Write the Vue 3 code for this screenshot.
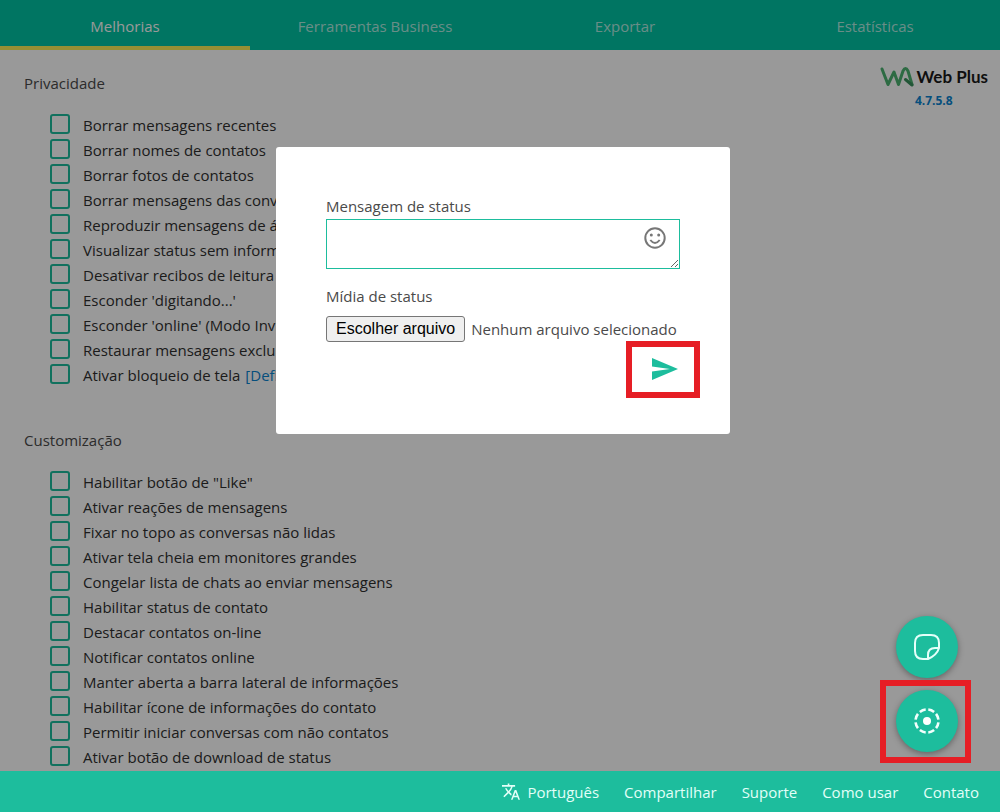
<template>
  <div class="app">
    <nav class="tabs">
      <button
        v-for="tab in tabs"
        :key="tab"
        type="button"
        :class="['tab', { active: tab === activeTab }]"
        @click="activeTab = tab"
      >
        {{ tab }}
      </button>
    </nav>

    <main class="content">
      <div class="sections">
        <section v-for="section in sections" :key="section.title" class="section">
          <h2 class="section-title">{{ section.title }}</h2>
          <ul class="option-list">
            <li v-for="(option, i) in section.options" :key="option" class="option">
              <input :id="section.id + i" type="checkbox" class="check" />
              <label :for="section.id + i">{{ option }}</label>
              <a v-if="option === 'Ativar bloqueio de tela'" href="#" class="link">[Definir senha]</a>
            </li>
          </ul>
        </section>
      </div>

      <div class="brand">
        <div class="brand-name">
          <svg class="brand-logo" width="34" height="20" viewBox="0 0 34 20" fill="none" stroke-linecap="round" stroke-linejoin="round">
            <path d="M2 2 L8 17.5 L14 5 L18.5 17.5 L23 4 Q25.500 -1 28 4 L32 17.500" stroke="#4cb271" stroke-width="3" />
            <path d="M32 18 L25.500 12.500" stroke="#3a8f5c" stroke-width="3" />
          </svg>
          <span>Web Plus</span>
        </div>
        <a href="#" class="version">4.7.5.8</a>
      </div>
    </main>

    <div class="overlay">
      <form class="modal" @submit.prevent>
        <label for="status-text" class="field-label">Mensagem de status</label>
        <div class="text-wrap">
          <textarea id="status-text" v-model="message" class="status-text"></textarea>
          <button type="button" class="emoji" aria-label="Emoji">
            <svg width="24" height="24" viewBox="0 0 24 24" fill="none" stroke="#777" stroke-width="2">
              <circle cx="12" cy="12" r="9.7" />
              <circle cx="8.3" cy="9" r="1.5" fill="#777" stroke="none" />
              <circle cx="15.7" cy="9" r="1.5" fill="#777" stroke="none" />
              <path d="M7.3 14 Q12 20 16.7 14" />
            </svg>
          </button>
        </div>
        <label for="status-media" class="field-label">Mídia de status</label>
        <div class="file-row">
          <input id="status-media" ref="fileInput" type="file" class="file-input" @change="onFile" />
          <button type="button" class="file-button" @click="fileInput.click()">Escolher arquivo</button>
          <span class="file-name">{{ fileName }}</span>
        </div>
        <div class="actions">
          <button type="submit" class="send" aria-label="Enviar">
            <svg width="30" height="30" viewBox="0 0 30 30" fill="#1dbd9d">
              <path d="M2 4 L28 15 L2 26 V17.5 L20 15 L2 12.5 Z" />
            </svg>
          </button>
        </div>
      </form>
    </div>

    <div class="fabs">
      <button type="button" class="fab" aria-label="Figurinhas">
        <svg width="28" height="28" viewBox="0 0 28 28" fill="none" stroke="#e4fff9" stroke-width="2" stroke-linejoin="round">
          <path d="M15 26 H10 Q2 26 2 18 V10 Q2 2 10 2 H18 Q26 2 26 10 V15 Q24 22 15 26 Z" />
          <path d="M15 26 V22 Q15 15 22 15 H26" />
        </svg>
      </button>
      <button type="button" class="fab marked" aria-label="Status">
        <svg width="28" height="28" viewBox="0 0 28 28" fill="none">
          <circle cx="14" cy="14" r="11.5" stroke="#f2fffc" stroke-width="2.6" pathLength="80" stroke-dasharray="7 3" stroke-dashoffset="-1.5" />
          <circle cx="14" cy="14" r="4" fill="#fff" />
        </svg>
      </button>
    </div>

    <footer class="footer">
      <a href="#" class="footer-link">
        <svg width="18" height="18" viewBox="1 2 22 21" fill="#e2fff8">
          <path d="M12.870 15.070l-2.540-2.510.030-.030A17.520 17.520 0 0 0 14.070 6H17V4h-7V2H8v2H1v2h11.170C11.500 7.920 10.440 9.750 9 11.350 8.070 10.320 7.300 9.190 6.690 8h-2c.730 1.630 1.730 3.170 2.980 4.560l-5.090 5.020L4 19l5-5 3.110 3.110.760-2.040zM18.500 10h-2L12 22h2l1.120-3h4.750L21 22h2l-4.500-12zm-2.620 7l1.620-4.330L19.120 17h-3.240z" />
        </svg>
        Português
      </a>
      <a v-for="item in footerLinks" :key="item" href="#" class="footer-link">{{ item }}</a>
    </footer>
  </div>
</template>

<script setup>
import { ref } from 'vue'

const tabs = ['Melhorias', 'Ferramentas Business', 'Exportar', 'Estatísticas']
const activeTab = ref('Melhorias')
const message = ref('')
const fileInput = ref(null)
const fileName = ref('Nenhum arquivo selecionado')

const sections = [
  {
    id: 'privacy',
    title: 'Privacidade',
    options: [
      'Borrar mensagens recentes',
      'Borrar nomes de contatos',
      'Borrar fotos de contatos',
      'Borrar mensagens das conversas',
      'Reproduzir mensagens de áudio',
      'Visualizar status sem informar',
      'Desativar recibos de leitura',
      "Esconder 'digitando...'",
      "Esconder 'online' (Modo Invisível)",
      'Restaurar mensagens excluídas',
      'Ativar bloqueio de tela'
    ]
  },
  {
    id: 'custom',
    title: 'Customização',
    options: [
      'Habilitar botão de "Like"',
      'Ativar reações de mensagens',
      'Fixar no topo as conversas não lidas',
      'Ativar tela cheia em monitores grandes',
      'Congelar lista de chats ao enviar mensagens',
      'Habilitar status de contato',
      'Destacar contatos on-line',
      'Notificar contatos online',
      'Manter aberta a barra lateral de informações',
      'Habilitar ícone de informações do contato',
      'Permitir iniciar conversas com não contatos',
      'Ativar botão de download de status'
    ]
  }
]

const footerLinks = ['Compartilhar', 'Suporte', 'Como usar', 'Contato']

function onFile(e) {
  const file = e.target.files[0]
  fileName.value = file ? file.name : 'Nenhum arquivo selecionado'
}
</script>

<style>
body {
  margin: 0;
}
</style>

<style scoped>
.app {
  position: relative;
  display: flex;
  flex-direction: column;
  height: 100vh;
  overflow: hidden;
  background: #fff;
  color: #4a4a4a;
  font-family: 'Open Sans', 'Noto Sans', sans-serif;
  font-size: 15px;
}
button {
  padding: 0;
  border: none;
  background: none;
  font: inherit;
  cursor: pointer;
}
a {
  text-decoration: none;
}
svg {
  display: block;
}
.tabs {
  display: flex;
  flex: none;
  height: 50px;
  background: #00c3a3;
}
.tab {
  flex: 1;
  padding-top: 6px;
  border-bottom: 4px solid transparent;
  color: rgba(255, 255, 255, 0.7);
  font-weight: 500;
}
.tab.active {
  border-bottom-color: #faee58;
  color: #fff;
}
.content {
  display: flex;
  flex: 1;
  justify-content: space-between;
  min-height: 0;
  overflow: hidden;
}
.sections {
  padding: 21px 24px 0;
}
.section {
  margin-bottom: 40px;
}
.section-title {
  margin: 0 0 18px;
  font-size: 15px;
  font-weight: 400;
  line-height: 24px;
}
.option-list {
  margin: 0;
  padding: 0 0 0 26px;
  list-style: none;
}
.option {
  display: flex;
  align-items: flex-start;
  height: 25px;
  line-height: 25px;
  white-space: nowrap;
  color: #303030;
}
.check {
  appearance: none;
  box-sizing: border-box;
  width: 20px;
  height: 20px;
  margin: 1px 13px 0 0;
  border: 2px solid #1dbd9d;
  border-radius: 3px;
}
.check:checked {
  background: #1dbd9d;
}
.link {
  margin-left: 5px;
  color: #0b84d0;
}
.brand {
  padding: 15px 12px 0 0;
  text-align: center;
}
.brand-name {
  display: flex;
  align-items: center;
  gap: 3px;
  color: #1a1a1a;
  font-family: Lato, sans-serif;
  font-size: 17px;
  font-weight: 700;
  line-height: 24px;
}
.version {
  color: #0b84d0;
  font-size: 12px;
  font-weight: 700;
  line-height: 20px;
}
.overlay {
  position: absolute;
  inset: 0;
  display: flex;
  align-items: flex-start;
  justify-content: center;
  padding: 147px 0 0 6px;
  background: rgba(0, 0, 0, 0.4);
}
.modal {
  display: flex;
  flex-direction: column;
  box-sizing: border-box;
  width: 454px;
  max-width: 100%;
  padding: 50px;
  border-radius: 3px;
  background: #fff;
}
.field-label {
  margin-bottom: 4px;
  line-height: 18px;
}
.text-wrap {
  position: relative;
  display: flex;
  margin-bottom: 18px;
}
.status-text {
  box-sizing: border-box;
  width: 100%;
  height: 50px;
  padding: 8px 44px 8px 8px;
  border: 1px solid #1dbd9d;
  outline: none;
  font: inherit;
}
.emoji {
  position: absolute;
  top: 7px;
  right: 13px;
}
.file-row {
  display: flex;
  align-items: center;
  gap: 6px;
  margin-top: 7px;
  white-space: nowrap;
}
.file-input {
  position: absolute;
  width: 1px;
  height: 1px;
  opacity: 0;
}
.file-button {
  box-sizing: border-box;
  height: 26px;
  padding: 0 9px;
  border: 1px solid #767676;
  border-radius: 3px;
  background: #efefef;
  color: #000;
  font-family: 'Liberation Sans', Arial, sans-serif;
  font-size: 16px;
}
.actions {
  display: flex;
  justify-content: flex-end;
  margin-top: 12px;
}
.send {
  position: relative;
}
/* red highlight frames */
.send::after,
.marked::after {
  content: '';
  position: absolute;
  border: 6px solid #e61e25;
}
.send::after {
  inset: -13px -20px -14px -24px;
}
.fabs {
  position: absolute;
  right: 42px;
  bottom: 60px;
  display: flex;
  flex-direction: column;
  gap: 12px;
}
.fab {
  position: relative;
  display: flex;
  align-items: center;
  justify-content: center;
  width: 62px;
  height: 62px;
  border-radius: 50%;
  background: #1dbd9d;
  box-shadow: 0 2px 6px rgba(0, 0, 0, 0.35);
}
.marked::after {
  inset: -10px -13px -11px -16px;
}
.footer {
  position: relative;
  display: flex;
  flex: none;
  align-items: center;
  justify-content: flex-end;
  gap: 25px;
  height: 41px;
  padding: 0 21px;
  background: #1dbd9d;
}
.footer-link {
  display: flex;
  align-items: center;
  gap: 7px;
  color: #e2fff8;
}
</style>
